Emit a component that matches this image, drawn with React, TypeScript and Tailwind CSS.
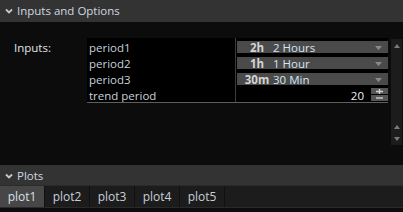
import React from "react";

const Chevron = () => (
  <svg width="8" height="6" viewBox="0 0 8 6" className="shrink-0">
    <path d="M1 1.5 L4 4.5 L7 1.5" fill="none" stroke="#c8c8c8" strokeWidth="1.8" />
  </svg>
);

const Dropdown = ({ code, label }: { code: string; label: string }) => (
  <div className="h-[12px] mt-[3px] bg-[#4a4a4a] flex items-center pl-[4px] pr-[6px] leading-[13px] pt-[1px]">
    <span className="w-[32px] text-center font-bold text-[#d4d4d4]">{code}</span>
    <span className="flex-1 text-[#d6e4f2]">{label}</span>
    <svg width="7" height="4" viewBox="0 0 7 4">
      <path d="M0 0 L7 0 L3.5 4 Z" fill="#8a8a8a" />
    </svg>
  </div>
);

const ArrowUp = () => (
  <svg width="6" height="4" viewBox="0 0 6 4">
    <path d="M0 4 L6 4 L3 0 Z" fill="#7a7a7a" />
  </svg>
);
const ArrowDown = () => (
  <svg width="6" height="4" viewBox="0 0 6 4">
    <path d="M0 0 L6 0 L3 4 Z" fill="#7a7a7a" />
  </svg>
);

export default function App() {
  const rows = [
    { name: "period1", code: "2h", label: "2 Hours" },
    { name: "period2", code: "1h", label: "1 Hour" },
    { name: "period3", code: "30m", label: "30 Min" },
  ];
  const tabs = ["plot1", "plot2", "plot3", "plot4", "plot5"];
  return (
    <div
      className="w-[403px] h-[212px] bg-[#0c0c0c] overflow-hidden text-[11px] text-[#c9d1d9] flex flex-col"
      style={{ fontFamily: '"Open Sans", "Noto Sans", sans-serif' }}
    >
      <div className="h-[22px] bg-[#333333] flex items-center pl-[5px] gap-[4px] text-[11.5px] text-[#d0d8e0]">
        <Chevron />
        <span>Inputs and Options</span>
      </div>
      <div className="h-[143px] flex">
        <div className="flex-1 flex pt-[16px]">
          <div className="w-[87px] pl-[14px] text-[#e0e4e8] leading-[19px] text-[11.5px]">Inputs:</div>
          <div className="w-[301px] h-[65px] flex flex-col">
            <div className="flex flex-1 bg-black">
              <div className="w-[148px] flex flex-col pl-[2px] text-[11.5px]">
                {rows.map((r) => (
                  <div key={r.name} className="h-[16px] leading-[19px]">{r.name}</div>
                ))}
                <div className="h-[16px] leading-[19px]">trend period</div>
              </div>
              <div className="w-[1px] bg-[#3c3c3c]" />
              <div className="flex-1 flex flex-col pl-[1px] text-[11.5px]">
                {rows.map((r) => (
                  <div key={r.name} className="h-[16px]">
                    <Dropdown code={r.code} label={r.label} />
                  </div>
                ))}
                <div className="h-[16px] flex items-center justify-end">
                  <span className="text-[#e8f0ff] mr-[7px] leading-[13px] pt-[2px]">20</span>
                  <div className="w-[17px] flex flex-col gap-[1px] mt-[1px]">
                    <div className="h-[6px] bg-[#555555] flex items-center justify-center">
                      <svg width="7" height="5" viewBox="0 0 7 5">
                        <path d="M0 2.5 H7 M3.5 0 V5" stroke="#cfcfcf" strokeWidth="1.4" />
                      </svg>
                    </div>
                    <div className="h-[6px] bg-[#555555] flex items-center justify-center">
                      <svg width="7" height="2" viewBox="0 0 7 2">
                        <path d="M0 1 H7" stroke="#cfcfcf" strokeWidth="1.4" />
                      </svg>
                    </div>
                  </div>
                </div>
              </div>
            </div>
            <div className="h-[1px] bg-[#5e5e5e]" />
          </div>
        </div>
        <div className="w-[11px] h-[106px] mt-[17px] mr-[1px] bg-[#1c1c1c] flex flex-col items-center justify-between pt-[5px] pb-[4px]">
          <ArrowUp />
          <div className="flex flex-col items-center gap-[8px]">
            <ArrowUp />
            <ArrowDown />
          </div>
        </div>
      </div>
      <div className="h-[21px] bg-[#333333] flex items-center pl-[5px] gap-[4px] text-[11.5px] text-[#d0d8e0] border-b border-[#2a2a2a] pt-[1px]">
        <Chevron />
        <span>Plots</span>
      </div>
      <div className="h-[22px] bg-[#1c1c1c] flex border-b border-[#2a2a2a]">
        {tabs.map((t, i) => (
          <div
            key={t}
            className={
              "w-[45px] flex items-center justify-center border-r border-[#111111] text-[12px] " +
              (i === 0 ? "bg-[#474747] w-[44px] text-[#d8e0e8]" : "text-[#c8d0d8]")
            }
          >
            {t}
          </div>
        ))}
      </div>
    </div>
  );
}
